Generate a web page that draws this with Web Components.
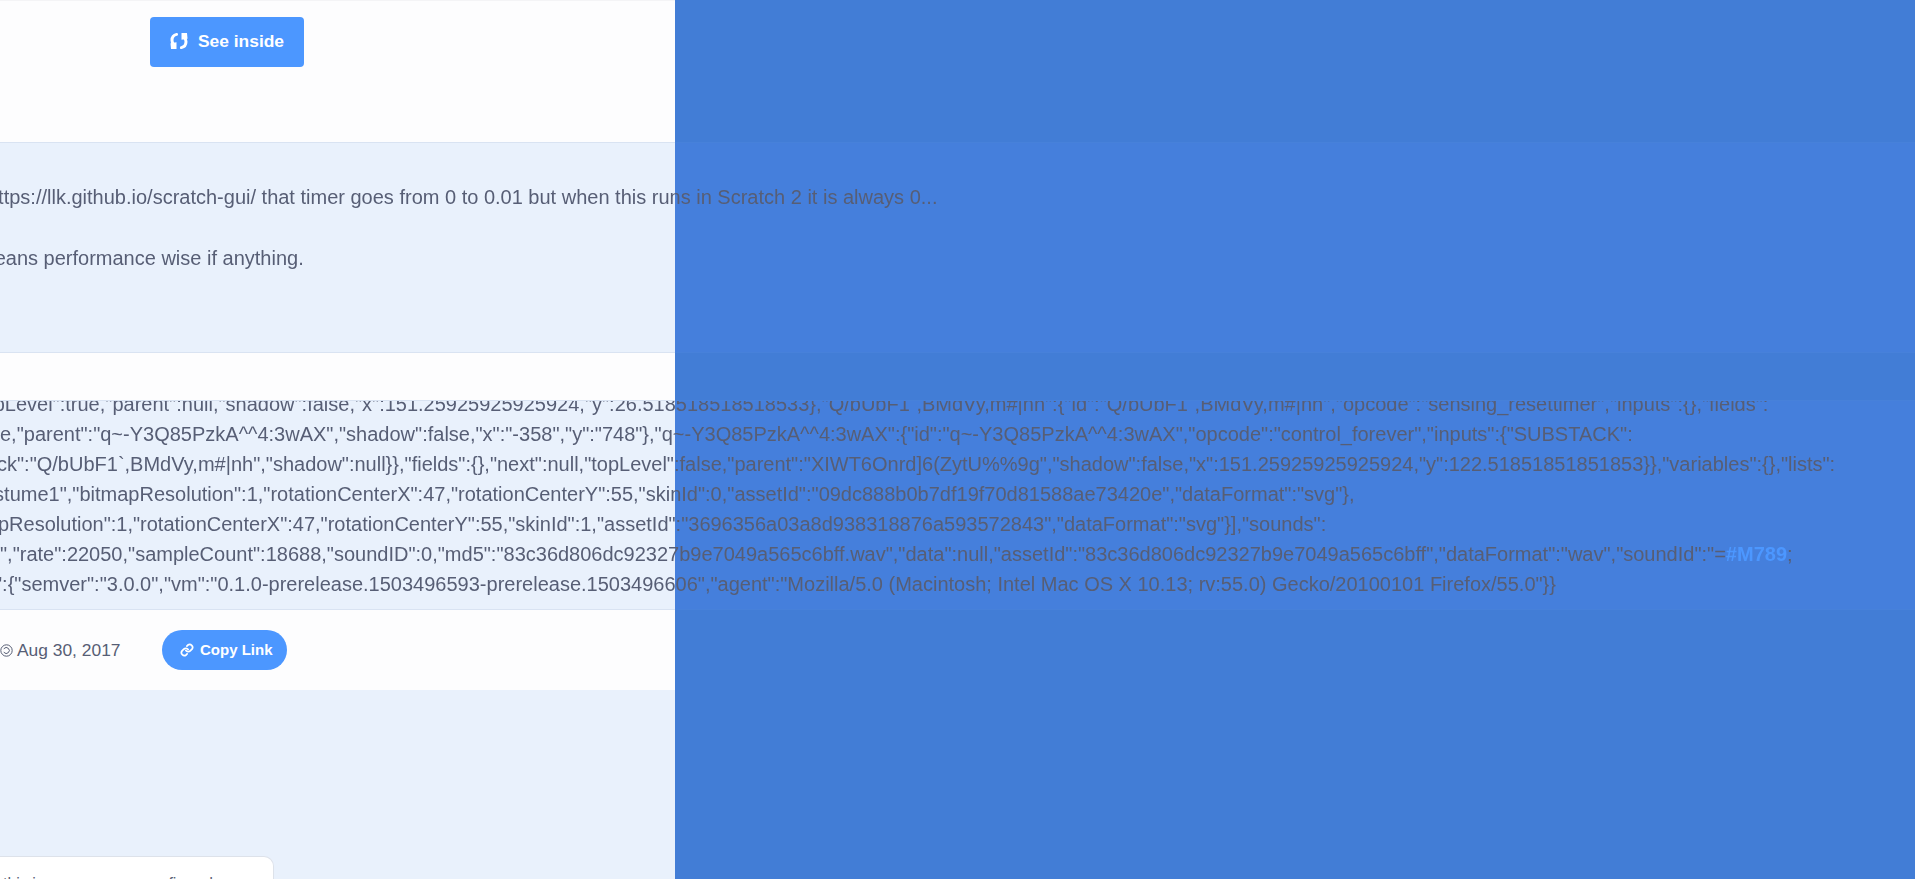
<!DOCTYPE html>
<html>
<head>
<meta charset="utf-8">
<title>Scratch issue</title>
<style>
  html, body { margin: 0; height: 100%; overflow: hidden; background: #e9f1fc; }
  body { font-family: "Liberation Sans", Arial, sans-serif; color: #575e75; }
</style>
</head>
<body>
<issue-page>
  <see-inside-panel></see-inside-panel>
  <notes-panel>
    <p class="a">https://llk.github.io/scratch-gui/ that timer goes from 0 to 0.01 but when this runs in Scratch 2 it is always 0...</p>
    <p class="b">means performance wise if anything.</p>
  </notes-panel>
  <code-panel></code-panel>
  <share-panel></share-panel>
  <comment-card></comment-card>
</issue-page>
<blue-cover></blue-cover>

<script>
const BTN_BLUE = "#4c97ff";

class IssuePage extends HTMLElement {
  constructor() {
    super();
    this.attachShadow({ mode: "open" }).innerHTML = `
      <style>
        :host { display: block; height: 879px; overflow: hidden; }
      </style>
      <slot></slot>`;
  }
}

class SeeInsidePanel extends HTMLElement {
  constructor() {
    super();
    this.attachShadow({ mode: "open" }).innerHTML = `
      <style>
        :host {
          display: block; box-sizing: border-box; height: 143px; padding: 16px 0 0 150px;
          background: #fdfdfe; border-top: 1px solid #f4f4f6; border-bottom: 1px solid #d9e3f2;
        }
        a {
          display: inline-flex; align-items: center; gap: 9px; box-sizing: border-box;
          width: 154px; height: 50px; padding: 0 0 2px 19px; border-radius: 4px;
          background: ${BTN_BLUE}; color: #fff; font: bold 17.4px "Liberation Sans", sans-serif;
        }
        svg { width: 20px; height: 20px; flex: none; }
      </style>
      <a>
        <svg viewBox="0 0 20 20">
          <path d="M7.600 3.400C4.800 4 3 6.300 3 9.200c0 1.500.5 2.800 1.400 3.800" fill="none" stroke="#fff" stroke-width="3" stroke-linecap="round"/>
          <path d="M1.500 12.300l6-1.100v6.900H2z" fill="#fff"/>
          <path d="M12.400 16.600c2.800-.6 4.600-2.900 4.600-5.800 0-1.500-.5-2.800-1.400-3.800" fill="none" stroke="#fff" stroke-width="3" stroke-linecap="round"/>
          <path d="M18.500 7.700l-6 1.100V1.900H18z" fill="#fff"/>
        </svg>
        <span>See inside</span>
      </a>`;
  }
}

class NotesPanel extends HTMLElement {
  constructor() {
    super();
    this.attachShadow({ mode: "open" }).innerHTML = `
      <style>
        :host {
          display: block; position: relative; z-index: 5; box-sizing: border-box; height: 209px;
          font-size: 20px; line-height: 30px; white-space: nowrap;
        }
        ::slotted(p) { margin: 0; }
        ::slotted(p.a) { padding-top: 39px; margin-left: -13px; }
        ::slotted(p.b) { padding-top: 31px; margin-left: -22px; }
      </style>
      <slot></slot>`;
  }
}

// the long json paste, scrolled to the left and cut off by the header above it
const CODE_LINES = [
  [-23, `topLevel":true,"parent":null,"shadow":false,"x":151.25925925925924,"y":26.518518518518533},"Q/bUbF1\`,BMdVy,m#|nh":{"id":"Q/bUbF1\`,BMdVy,m#|nh","opcode":"sensing_resettimer","inputs":{},"fields":`],
  [0, `e,"parent":"q~-Y3Q85PzkA^^4:3wAX","shadow":false,"x":"-358","y":"748"},"q~-Y3Q85PzkA^^4:3wAX":{"id":"q~-Y3Q85PzkA^^4:3wAX","opcode":"control_forever","inputs":{"SUBSTACK":`],
  [-3, `ck":"Q/bUbF1\`,BMdVy,m#|nh","shadow":null}},"fields":{},"next":null,"topLevel":false,"parent":"XIWT6Onrd]6(ZytU%%9g","shadow":false,"x":151.25925925925924,"y":122.51851851851853}},"variables":{},"lists":`],
  [-27, `costume1","bitmapResolution":1,"rotationCenterX":47,"rotationCenterY":55,"skinId":0,"assetId":"09dc888b0b7df19f70d81588ae73420e","dataFormat":"svg"},`],
  [-2, `pResolution":1,"rotationCenterX":47,"rotationCenterY":55,"skinId":1,"assetId":"3696356a03a8d938318876a593572843","dataFormat":"svg"}],"sounds":`],
  [0, `","rate":22050,"sampleCount":18688,"soundID":0,"md5":"83c36d806dc92327b9e7049a565c6bff.wav","data":null,"assetId":"83c36d806dc92327b9e7049a565c6bff","dataFormat":"wav","soundId":"=<b>#M789</b>;`],
  [-5, `":{"semver":"3.0.0","vm":"0.1.0-prerelease.1503496593-prerelease.1503496606","agent":"Mozilla/5.0 (Macintosh; Intel Mac OS X 10.13; rv:55.0) Gecko/20100101 Firefox/55.0"}}`],
];

class CodePanel extends HTMLElement {
  constructor() {
    super();
    const rows = CODE_LINES.map(([x, t]) => `<div style="margin-left:${x}px">${t}</div>`).join("");
    this.attachShadow({ mode: "open" }).innerHTML = `
      <style>
        :host { display: block; }
        .head { height: 47px; background: #fdfdfe; border-top: 1px solid #d9e3f2; border-bottom: 1px solid #d9e3f2; }
        .body {
          position: relative; z-index: 5; box-sizing: border-box; height: 208px; overflow: hidden;
          font-size: 20px; line-height: 30px; white-space: nowrap;
        }
        .rows { margin-top: -12px; }
        b { color: ${BTN_BLUE}; }
      </style>
      <div class="head"></div>
      <div class="body"><div class="rows">${rows}</div></div>`;
  }
}

class SharePanel extends HTMLElement {
  constructor() {
    super();
    this.attachShadow({ mode: "open" }).innerHTML = `
      <style>
        :host {
          display: flex; align-items: center; box-sizing: border-box; height: 81px;
          background: #fdfdfe; border-top: 1px solid #d9e3f2;
        }
        .date { display: flex; align-items: center; gap: 4px; width: 162px; font-size: 17.4px; }
        .date svg { width: 13px; height: 13px; flex: none; }
        a {
          display: inline-flex; align-items: center; gap: 6px; box-sizing: border-box;
          width: 125px; height: 40px; padding: 0 0 1px 18px; border-radius: 20px;
          background: ${BTN_BLUE}; color: #fff; font: bold 15px "Liberation Sans", sans-serif;
        }
        a svg { width: 14px; height: 14px; flex: none; }
      </style>
      <span class="date">
        <svg viewBox="0 0 13 13" fill="none" stroke="#575e75" stroke-width="1">
          <circle cx="6.500" cy="6.500" r="5.700"/>
          <path d="M4 4.500a3 3 0 1 1 0 4" stroke-linecap="round"/>
        </svg>
        <span>Aug 30, 2017</span>
      </span>
      <a>
        <svg viewBox="0 0 24 24" fill="none" stroke="#fff" stroke-width="3" stroke-linecap="round" stroke-linejoin="round">
          <path d="M10 13a5 5 0 0 0 7.500.5l3-3a5 5 0 0 0-7-7l-1.700 1.700"/>
          <path d="M14 11a5 5 0 0 0-7.500-.5l-3 3a5 5 0 0 0 7 7l1.700-1.700"/>
        </svg>
        <span>Copy Link</span>
      </a>`;
  }
}

class CommentCard extends HTMLElement {
  constructor() {
    super();
    this.attachShadow({ mode: "open" }).innerHTML = `
      <style>
        :host { display: block; margin-top: 166px; }
        div {
          box-sizing: border-box; width: 274px; height: 60px; padding: 15px 0 0 3px;
          background: #fff; border: 1px solid #dde2ea; border-left: 0; border-radius: 0 10px 0 0;
          font-size: 16px; line-height: 24px; white-space: nowrap; overflow: hidden;
        }
      </style>
      <div>this is now seen as confirmed</div>`;
  }
}

class BlueCover extends HTMLElement {
  constructor() {
    super();
    this.attachShadow({ mode: "open" }).innerHTML = `
      <style>
        :host {
          position: fixed; left: 675px; top: 0; right: 0; bottom: 0; z-index: 2;
          display: flex; flex-direction: column; background: #427dd6;
        }
        .dark { height: 142px; }
        .light { background: #457fdc; border-top: 1px solid #4781da; border-bottom: 1px solid #4781da; box-sizing: border-box; }
      </style>
      <div class="dark"></div>
      <div class="light" style="height:211px"></div>
      <div style="height:47px"></div>
      <div class="light" style="height:210px"></div>`;
  }
}

customElements.define("issue-page", IssuePage);
customElements.define("see-inside-panel", SeeInsidePanel);
customElements.define("notes-panel", NotesPanel);
customElements.define("code-panel", CodePanel);
customElements.define("share-panel", SharePanel);
customElements.define("comment-card", CommentCard);
customElements.define("blue-cover", BlueCover);
</script>
</body>
</html>
